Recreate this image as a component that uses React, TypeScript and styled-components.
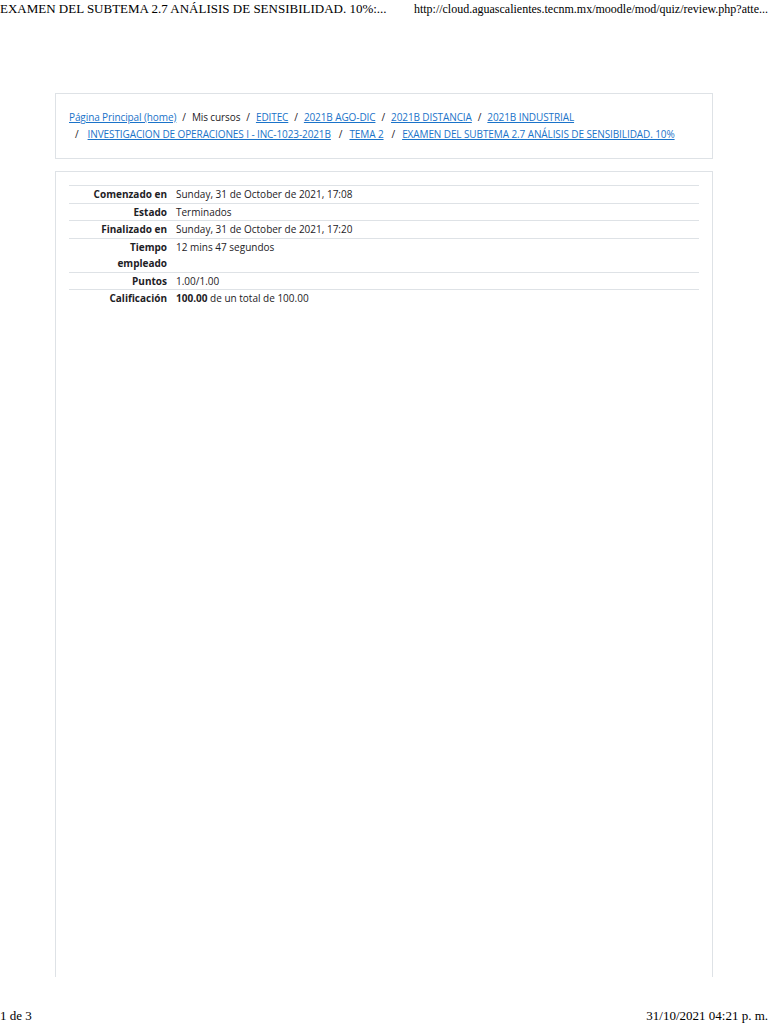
import styled, { createGlobalStyle } from "styled-components";

const GlobalStyle = createGlobalStyle`
  html, body {
    margin: 0;
    padding: 0;
    background: #fff;
  }
`;

const Page = styled.div`
  display: flex;
  flex-direction: column;
  height: 1024px;
  overflow: hidden;
`;

const PrintLine = styled.div`
  display: flex;
  justify-content: space-between;
  font-family: "Liberation Serif", "Times New Roman", serif;
  font-size: 13px;
  line-height: 16px;
  color: #000;
  white-space: nowrap;
`;

const PrintHeader = styled(PrintLine)`
  padding-top: 1px;
  height: 17px;
`;

const Url = styled.span`
  font-size: 12px;
`;

const PrintFooter = styled(PrintLine)`
  height: 47px;
  padding-top: 31px;
  box-sizing: border-box;
`;

const Main = styled.main`
  flex: 1;
  display: flex;
  flex-direction: column;
  padding: 75px 55px 0;
  min-height: 0;
  font-family: "Open Sans", "Noto Sans", sans-serif;
  font-size: 10px;
  color: #1d2125;
`;

const Card = styled.section<{ $open?: boolean }>`
  border: 1px solid #dee2e6;
  border-bottom: ${(p) => (p.$open ? "none" : "1px solid #dee2e6")};
  background: #fff;
  box-sizing: border-box;
`;

const CrumbCard = styled(Card)`
  height: 66px;
  padding: 15px 13px 0;
`;

const ReviewCard = styled(Card)`
  flex: 1;
  margin-top: 12px;
  padding: 13px 13px 0;
`;

const Crumbs = styled.ol`
  list-style: none;
  margin: 0;
  padding: 0;
  display: flex;
  flex-wrap: wrap;
  line-height: 17px;
  letter-spacing: -0.1px;
`;

const Crumb = styled.li`
  white-space: nowrap;
`;

const Sep = styled.span<{ $lead?: boolean; $wide?: boolean }>`
  padding: ${(p) => (p.$lead ? "0 9px 0 6px" : p.$wide ? "0 7px 0 8px" : "0 6px")};
  color: #1d2125;
`;

const Link = styled.a`
  color: #1a73c9;
  text-decoration: underline;
`;

const Table = styled.table`
  width: 100%;
  border-collapse: collapse;
`;

const Row = styled.tr`
  border-top: 1px solid #dee2e6;
`;

const Label = styled.th`
  width: 75px;
  text-align: right;
  font-weight: 700;
  padding: 0 9px 0 23px;
  line-height: 16.5px;
  vertical-align: top;
`;

const Value = styled.td`
  padding: 0;
  line-height: 16.5px;
  vertical-align: top;
`;

const crumbs: { text: string; link: boolean; lead?: boolean }[] = [
  { text: "Página Principal (home)", link: true },
  { text: "Mis cursos", link: false },
  { text: "EDITEC", link: true },
  { text: "2021B AGO-DIC", link: true },
  { text: "2021B DISTANCIA", link: true },
  { text: "2021B INDUSTRIAL", link: true },
  { text: "INVESTIGACION DE OPERACIONES I - INC-1023-2021B", link: true, lead: true },
  { text: "TEMA 2", link: true },
  { text: "EXAMEN DEL SUBTEMA 2.7 ANÁLISIS DE SENSIBILIDAD. 10%", link: true },
];

const summary: { label: string; value: React.ReactNode }[] = [
  { label: "Comenzado en", value: "Sunday, 31 de October de 2021, 17:08" },
  { label: "Estado", value: "Terminados" },
  { label: "Finalizado en", value: "Sunday, 31 de October de 2021, 17:20" },
  { label: "Tiempo empleado", value: "12 mins 47 segundos" },
  { label: "Puntos", value: "1.00/1.00" },
  {
    label: "Calificación",
    value: (
      <>
        <b>100.00</b> de un total de 100.00
      </>
    ),
  },
];

export default function App() {
  return (
    <Page>
      <GlobalStyle />
      <PrintHeader>
        <span>EXAMEN DEL SUBTEMA 2.7 ANÁLISIS DE SENSIBILIDAD. 10%:...</span>
        <Url>http://cloud.aguascalientes.tecnm.mx/moodle/mod/quiz/review.php?atte...</Url>
      </PrintHeader>
      <Main>
        <CrumbCard>
          <Crumbs>
            {crumbs.map((c, i) => (
              <Crumb key={c.text}>
                {c.lead && <Sep $lead>/</Sep>}
                {c.link ? <Link href="#">{c.text}</Link> : c.text}
                {i < crumbs.length - 1 && i !== 5 && <Sep $wide={i > 5}>/</Sep>}
              </Crumb>
            ))}
          </Crumbs>
        </CrumbCard>
        <ReviewCard $open>
          <Table>
            <tbody>
              {summary.map((s) => (
                <Row key={s.label}>
                  <Label>{s.label}</Label>
                  <Value>{s.value}</Value>
                </Row>
              ))}
            </tbody>
          </Table>
        </ReviewCard>
      </Main>
      <PrintFooter>
        <span>1 de 3</span>
        <span>31/10/2021 04:21 p. m.</span>
      </PrintFooter>
    </Page>
  );
}
